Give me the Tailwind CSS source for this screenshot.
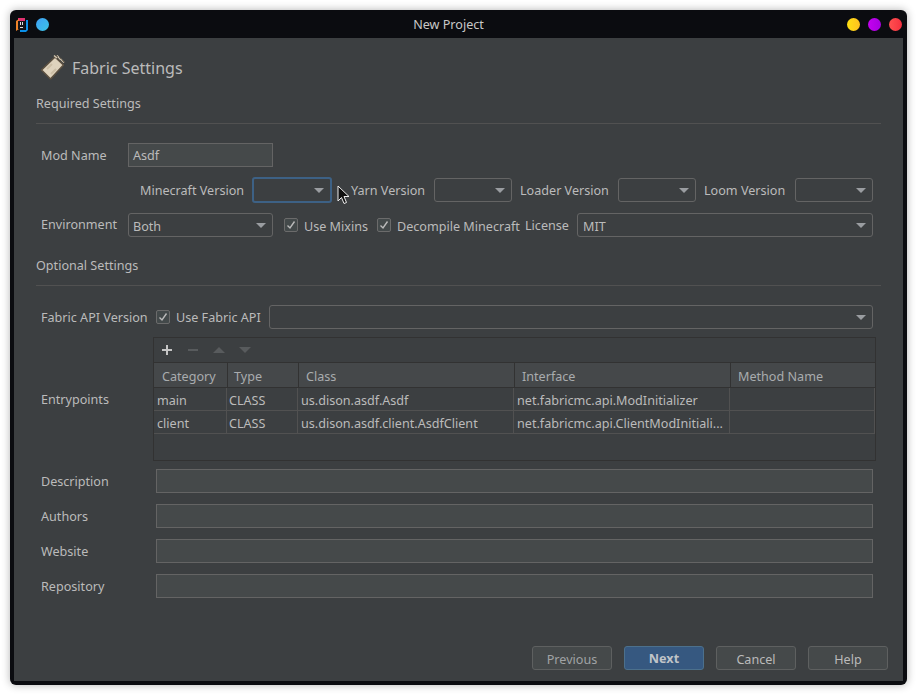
<!DOCTYPE html>
<html lang="en">
  <head>
    <meta charset="UTF-8" />
    <script src="https://cdn.jsdelivr.net/npm/@tailwindcss/browser@4"></script>
    <title>New Project</title>
  </head>
  <body class="w-[917px] h-[695px] bg-white overflow-hidden font-['Noto_Sans',sans-serif] text-[12.6px] leading-[19px] text-[#bbbbbb]">
    <div class="relative ml-[10px] mt-[10px] w-[897px] h-[675px] rounded-[6px] bg-[#0b0c10] shadow-[0_0_8px_rgba(0,0,0,0.3)] px-[4px] pb-[4px] flex flex-col">
      <!-- title bar -->
      <div class="h-[28px] shrink-0 flex items-center relative -mx-[4px] px-[5px]">
        <svg width="14" height="14" viewBox="0 0 14 14" class="mt-[1px]">
          <path d="M3 0h7v10H3z" fill="#e0316f" />
          <path d="M9 2h4v10l-2 2H5v-2h6V2z" fill="#0a8fe8" />
          <path d="M1 3l3-2v10l-3 2z" fill="#f0832a" />
          <rect x="3" y="3" width="7" height="8" fill="#141418" />
          <path d="M5 4h1v3H5zM7 4h1v3H7zM5 9h3v1H5z" fill="#ddd" />
        </svg>
        <div class="ml-[7px] mt-[1px] w-[13px] h-[13px] rounded-full bg-gradient-to-br from-[#3f9ff5] to-[#3cc4e4]"></div>
        <div class="absolute left-0 right-[20px] top-[5px] text-center text-[#c8c8c8]">New Project</div>
        <div class="ml-auto flex gap-[8px] mt-[1px]">
          <div class="w-[13px] h-[13px] rounded-full bg-gradient-to-r from-[#ffe010] to-[#ffc020]"></div>
          <div class="w-[13px] h-[13px] rounded-full bg-gradient-to-r from-[#c400f0] to-[#a800e0]"></div>
          <div class="w-[13px] h-[13px] rounded-full bg-gradient-to-r from-[#ff5050] to-[#f53040]"></div>
        </div>
      </div>

      <!-- content -->
      <div class="flex-1 bg-[#3c3f41] flex flex-col relative">
        <div class="h-[50px] mt-[5px] flex items-center pl-[26px] shrink-0">
          <svg width="26" height="28" viewBox="0 0 26 28" class="-mt-[1px]">
            <path d="M1.5 16 L15 3 L23.5 11 L10.5 25 Z" fill="#dfd3bd" stroke="#5c5040" stroke-width="1.6" stroke-linejoin="bevel" />
            <path d="M14 1.5 L17 4 M17 1.5 L20.5 5.5 M20 4.5 L24 8.5" fill="none" stroke="#cfc3ad" stroke-width="1.6" />
            <path d="M15.5 1 L18 3.2 M19.2 3 L21.5 5.2 M22.4 6.2 L24.6 8.4" fill="none" stroke="#5c5040" stroke-width="1" />
            <path d="M7 15l5-5M11 20l5-5" fill="none" stroke="#cdbfa6" stroke-width="2" />
          </svg>
          <span class="ml-[6px] text-[16px] text-[#bbbbbb]">Fabric Settings</span>
        </div>
        <div class="pl-[22px] h-[18px] mt-[1px] shrink-0">Required Settings</div>
        <div class="ml-[22px] mr-[22px] mt-[11px] h-px bg-[#515151] shrink-0"></div>

        <div class="flex items-center h-[24px] mt-[19px] pl-[27px] shrink-0">
          <span class="w-[87px] pt-[1px]">Mod Name</span>
          <div class="w-[145px] h-[24px] bg-[#45494a] border border-[#646464] pl-[4px] pt-[1px] flex items-center">Asdf</div>
        </div>

        <div class="flex items-center h-[24px] mt-[11px] pl-[126px] shrink-0">
          <span class="w-[112px] pt-[1px]">Minecraft Version</span>
          <div class="w-[80px] h-[26px] rounded-[3px] border-2 border-[#3d6185] bg-[#3c3f41] flex items-center justify-end pr-[6px]"><i class="w-0 h-0 border-x-[5px] border-x-transparent border-t-[5px] border-t-[#9a9da1]"></i></div>
          <span class="ml-[19px] w-[83px] pt-[1px]">Yarn Version</span>
          <div class="w-[78px] h-[24px] rounded-[3px] border border-[#646464] flex items-center justify-end pr-[6px]"><i class="w-0 h-0 border-x-[5px] border-x-transparent border-t-[5px] border-t-[#9a9da1]"></i></div>
          <span class="ml-[8px] w-[98px] pt-[1px]">Loader Version</span>
          <div class="w-[78px] h-[24px] rounded-[3px] border border-[#646464] flex items-center justify-end pr-[6px]"><i class="w-0 h-0 border-x-[5px] border-x-transparent border-t-[5px] border-t-[#9a9da1]"></i></div>
          <span class="ml-[8px] w-[91px] pt-[1px]">Loom Version</span>
          <div class="w-[78px] h-[24px] rounded-[3px] border border-[#646464] flex items-center justify-end pr-[6px]"><i class="w-0 h-0 border-x-[5px] border-x-transparent border-t-[5px] border-t-[#9a9da1]"></i></div>
        </div>

        <div class="flex items-center h-[24px] mt-[11px] pl-[27px] shrink-0">
          <span class="w-[87px] -mt-[1px]">Environment</span>
          <div class="w-[145px] h-[24px] rounded-[3px] border border-[#646464] flex items-center justify-between pl-[4px] pr-[6px]"><span class="pt-[2px]">Both</span><i class="w-0 h-0 border-x-[5px] border-x-transparent border-t-[5px] border-t-[#9a9da1]"></i></div>
          <div class="ml-[11px] w-[14px] h-[14px] rounded-[2px] border border-[#6b6b6b] bg-[#43494a] flex items-center justify-center"><svg width="10" height="10" viewBox="0 0 10 10"><path d="M1.5 5.5l2.5 2.5 4.5-6.5" fill="none" stroke="#bbbbbb" stroke-width="1.4" /></svg></div>
          <span class="ml-[6px] w-[73px] pt-[2px]">Use Mixins</span>
          <div class="w-[14px] h-[14px] rounded-[2px] border border-[#6b6b6b] bg-[#43494a] flex items-center justify-center"><svg width="10" height="10" viewBox="0 0 10 10"><path d="M1.5 5.5l2.5 2.5 4.5-6.5" fill="none" stroke="#bbbbbb" stroke-width="1.4" /></svg></div>
          <span class="ml-[6px] w-[128px] whitespace-nowrap pt-[2px]">Decompile Minecraft</span>
          <span class="w-[52px] pt-[1px]">License</span>
          <div class="w-[296px] h-[24px] rounded-[3px] border border-[#646464] flex items-center justify-between pl-[5px] pr-[6px]"><span class="pt-[2px]">MIT</span><i class="w-0 h-0 border-x-[5px] border-x-transparent border-t-[5px] border-t-[#9a9da1]"></i></div>
        </div>

        <div class="pl-[22px] h-[18px] mt-[19px] shrink-0">Optional Settings</div>
        <div class="ml-[22px] mr-[22px] mt-[11px] h-px bg-[#515151] shrink-0"></div>

        <div class="flex items-center h-[24px] mt-[19px] pl-[27px] shrink-0">
          <span class="w-[115px] whitespace-nowrap pt-[1px]">Fabric API Version</span>
          <div class="w-[14px] h-[14px] rounded-[2px] border border-[#6b6b6b] bg-[#43494a] flex items-center justify-center"><svg width="10" height="10" viewBox="0 0 10 10"><path d="M1.5 5.5l2.5 2.5 4.5-6.5" fill="none" stroke="#bbbbbb" stroke-width="1.4" /></svg></div>
          <span class="ml-[6px] w-[93px] whitespace-nowrap pt-[1px]">Use Fabric API</span>
          <div class="w-[604px] h-[24px] rounded-[3px] border border-[#646464] flex items-center justify-end pr-[6px]"><i class="w-0 h-0 border-x-[5px] border-x-transparent border-t-[5px] border-t-[#9a9da1]"></i></div>
        </div>

        <!-- entrypoints -->
        <div class="flex mt-[8px] pl-[27px] shrink-0">
          <span class="w-[112px] pt-[53px]">Entrypoints</span>
          <div class="w-[723px] h-[124px] border border-[#323232] flex flex-col">
            <div class="h-[25px] flex items-center pl-[7px] gap-[14px] border-b border-[#323232] shrink-0">
              <svg width="12" height="12" viewBox="0 0 12 12"><path d="M5 1h2v4h4v2H7v4H5V7H1V5h4z" fill="#c5c5c5" /></svg>
              <svg width="12" height="12" viewBox="0 0 12 12"><path d="M1 5h10v2H1z" fill="#585b5d" /></svg>
              <svg width="12" height="12" viewBox="0 0 12 12"><path d="M0 9l6-6 6 6z" fill="#585b5d" /></svg>
              <svg width="12" height="12" viewBox="0 0 12 12"><path d="M0 3h12l-6 6z" fill="#585b5d" /></svg>
            </div>
            <div class="grid grid-cols-[74px_71px_216px_216px_1fr] h-[25px] shrink-0 bg-[#45484a] border-b border-[#323232] text-[#a9acae]">
              <div class="pl-[8px] pt-[2px] flex items-center border-r border-[#323232]">Category</div>
              <div class="pl-[6px] pt-[2px] flex items-center border-r border-[#323232]">Type</div>
              <div class="pl-[7px] pt-[2px] flex items-center border-r border-[#323232]">Class</div>
              <div class="pl-[7px] pt-[2px] flex items-center border-r border-[#323232]">Interface</div>
              <div class="pl-[7px] pt-[2px] flex items-center">Method Name</div>
            </div>
            <div class="grid grid-cols-[73px_71px_216px_216px_1fr] h-[23px] shrink-0 border-b border-[#515151]">
              <div class="pl-[3px] pt-[2px] flex items-center border-r border-[#515151]">main</div>
              <div class="pl-[2px] pt-[2px] flex items-center border-r border-[#515151]">CLASS</div>
              <div class="pl-[3px] pt-[2px] flex items-center border-r border-[#515151]">us.dison.asdf.Asdf</div>
              <div class="pl-[3px] pt-[2px] flex items-center border-r border-[#515151]">net.fabricmc.api.ModInitializer</div>
              <div class="border-r border-[#515151]"></div>
            </div>
            <div class="grid grid-cols-[73px_71px_216px_216px_1fr] h-[23px] shrink-0 border-b border-[#515151]">
              <div class="pl-[3px] pt-[2px] flex items-center border-r border-[#515151]">client</div>
              <div class="pl-[2px] pt-[2px] flex items-center border-r border-[#515151]">CLASS</div>
              <div class="pl-[3px] pt-[2px] flex items-center border-r border-[#515151]">us.dison.asdf.client.AsdfClient</div>
              <div class="pl-[3px] pt-[2px] flex items-center border-r border-[#515151] whitespace-nowrap overflow-hidden">net.fabricmc.api.ClientModInitiali...</div>
              <div class="border-r border-[#515151]"></div>
            </div>
          </div>
        </div>

        <div class="flex flex-col gap-[11px] mt-[8px] pl-[27px] shrink-0">
          <div class="flex items-center h-[24px]"><span class="w-[115px]">Description</span><div class="w-[717px] h-[24px] bg-[#45494a] border border-[#646464]"></div></div>
          <div class="flex items-center h-[24px]"><span class="w-[115px]">Authors</span><div class="w-[717px] h-[24px] bg-[#45494a] border border-[#646464]"></div></div>
          <div class="flex items-center h-[24px]"><span class="w-[115px]">Website</span><div class="w-[717px] h-[24px] bg-[#45494a] border border-[#646464]"></div></div>
          <div class="flex items-center h-[24px]"><span class="w-[115px]">Repository</span><div class="w-[717px] h-[24px] bg-[#45494a] border border-[#646464]"></div></div>
        </div>

        <div class="mt-auto mb-[11px] pr-[15px] flex justify-end gap-[12px] shrink-0">
          <div class="w-[80px] h-[24px] pt-[2px] rounded-[3px] border border-[#5e6060] bg-[#45494a] flex items-center justify-center text-[#a0a3a5]">Previous</div>
          <div class="w-[80px] h-[24px] rounded-[3px] border border-[#4c708c] bg-[#365880] flex items-center justify-center font-bold text-[#c0c4c8]">Next</div>
          <div class="w-[80px] h-[24px] pt-[2px] rounded-[3px] border border-[#5e6060] bg-[#45494a] flex items-center justify-center">Cancel</div>
          <div class="w-[80px] h-[24px] pt-[2px] rounded-[3px] border border-[#5e6060] bg-[#45494a] flex items-center justify-center">Help</div>
        </div>
      </div>

      <!-- mouse cursor -->
      <svg width="14" height="20" viewBox="0 0 14 20" class="absolute left-[327px] top-[175px]">
        <path d="M1 1v15l3.5-3.5 2.5 6 2.5-1-2.5-6h5z" fill="#111" stroke="#eee" stroke-width="1" />
      </svg>
    </div>
  </body>
</html>
